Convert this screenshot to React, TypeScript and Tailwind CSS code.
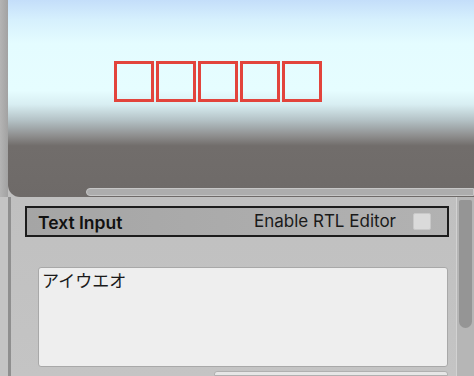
import React from "react";

// Unity-style game view with an inspector "Text Input" panel underneath
const boxes = [0, 1, 2, 3, 4];

export default function App() {
  return (
    <div
      className="flex h-[376px] w-[474px] flex-col overflow-hidden bg-[#c2c2c2]"
      style={{ fontFamily: "Inter, 'Noto Sans CJK JP', sans-serif" }}
    >
      {/* game view */}
      <div className="flex h-[197px] shrink-0 bg-[#c0c0c0]">
        <div className="w-[8px] shrink-0 bg-[linear-gradient(to_right,#b4b4b4,#a2a2a2)]" />
        <div className="flex flex-1 flex-col rounded-bl-[12px] bg-[linear-gradient(to_bottom,#c4defa_0%,#d6f0fd_10%,#e4fcff_22%,#e6fdff_46%,#d8eef2_53%,#b4c2c6_61%,#8e8e8e_69%,#716d6b_74%,#6e6a68_100%)]">
          <div className="flex gap-[2px] pl-[106px] pt-[61px]">
            {boxes.map((b) => (
              <div
                key={b}
                className="h-[41px] w-[40px] border-[3px] border-[#e2443c]"
              />
            ))}
          </div>
          <div className="mb-[1px] ml-[78px] mt-auto h-[8px] rounded-l-full border border-[#c6c6c6] bg-[#adadad]" />
        </div>
      </div>

      {/* inspector */}
      <div className="flex flex-1">
        <div className="w-[8px] shrink-0 bg-[#c4c4c4]" />
        <div className="w-[3px] shrink-0 bg-[#8f8f8f]" />
        <div className="flex flex-1 flex-col bg-[linear-gradient(to_bottom,#c0c0c0,#c4c4c4)]">
          <div className="ml-[14px] mr-[7px] mt-[9px] flex h-[31px] items-center border-2 border-[#1c1c1c] bg-[linear-gradient(to_right,#a5a5a5,#b2b2b2)] pl-[11px] pr-[16px]">
            <span className="pt-[3px] text-[17.5px] font-semibold text-[#111]">Text Input</span>
            <span className="ml-auto text-[17px] text-[#1a1a1a]">Enable RTL Editor</span>
            <div className="ml-[17px] h-[17px] w-[18px] rounded-[2px] border border-[#c8c8c8] bg-[#dadada]" />
          </div>
          <div className="ml-[27px] mr-[8px] mt-[30px] h-[100px] rounded-[3px] border border-[#a8a8a8] bg-[#eeeeee] px-[3px] pt-[1px]">
            <span
              className="text-[17px] leading-[22px] text-[#1a1a1a]"
              style={{ fontFamily: "'Noto Sans CJK JP', sans-serif" }}
            >
              アイウエオ
            </span>
          </div>
          <div className="ml-[203px] mr-[8px] mt-[4px] flex-1 rounded-t-[3px] border border-[#b0b0b0] bg-[#e6e6e6]" />
        </div>
        <div className="flex w-[18px] shrink-0 border-l border-[#d2d2d2] bg-[#b6b6b6]">
          <div className="ml-[2px] mt-[3px] h-[128px] w-[13px] rounded-b-[7px] rounded-t-[2px] bg-[#959595]" />
        </div>
      </div>
    </div>
  );
}
